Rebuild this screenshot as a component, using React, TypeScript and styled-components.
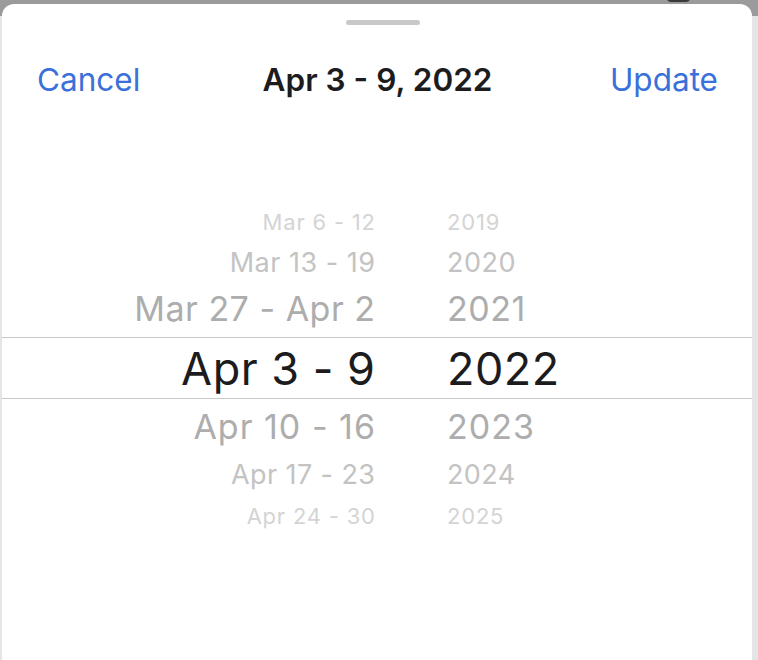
import styled, { createGlobalStyle } from "styled-components";

const GlobalStyle = createGlobalStyle`
  html, body {
    margin: 0;
    padding: 0;
    background: #e5e5e5;
    font-family: Inter, "Noto Sans", sans-serif;
  }
`;

type WheelRow = {
  week: string;
  year: string;
  size: number;
  spacing: number;
  height: number;
  color: string;
};

const rowsAbove: WheelRow[] = [
  { week: "Mar 6 - 12", year: "2019", size: 22, spacing: 0.8, height: 44, color: "#d4d4d4" },
  { week: "Mar 13 - 19", year: "2020", size: 27, spacing: 0.5, height: 36, color: "#c3c3c3" },
  { week: "Mar 27 - Apr 2", year: "2021", size: 34, spacing: 0.5, height: 57, color: "#adadad" },
];

const rowsBelow: WheelRow[] = [
  { week: "Apr 10 - 16", year: "2023", size: 34, spacing: 1, height: 55, color: "#adadad" },
  { week: "Apr 17 - 23", year: "2024", size: 27, spacing: 0.4, height: 41, color: "#c3c3c3" },
  { week: "Apr 24 - 30", year: "2025", size: 22, spacing: 0.8, height: 42, color: "#d4d4d4" },
];

function Row({ row }: { row: WheelRow }) {
  return (
    <WheelLine $height={row.height}>
      <WeekCell $size={row.size} $spacing={row.spacing} $color={row.color}>
        {row.week}
      </WeekCell>
      <YearCell $size={row.size} $spacing={row.spacing} $color={row.color}>
        {row.year}
      </YearCell>
    </WheelLine>
  );
}

export default function App() {
  return (
    <>
      <GlobalStyle />
      <Screen>
        <BehindIcon />
        <Sheet>
          <Handle />
          <Header>
            <TextButton>Cancel</TextButton>
            <Title>Apr 3 - 9, 2022</Title>
            <TextButton $right>Update</TextButton>
          </Header>
          <Wheel>
            {rowsAbove.map((r) => (
              <Row key={r.week} row={r} />
            ))}
            <SelectedLine>
              <WeekCell $size={45} $spacing={0.5} $color="#1c1c1e">
                Apr 3 - 9
              </WeekCell>
              <YearCell $size={45} $spacing={0.5} $color="#1c1c1e">
                2022
              </YearCell>
            </SelectedLine>
            {rowsBelow.map((r) => (
              <Row key={r.week} row={r} />
            ))}
          </Wheel>
        </Sheet>
      </Screen>
    </>
  );
}

const Screen = styled.div`
  position: relative;
  width: 758px;
  height: 660px;
  overflow: hidden;
  background: linear-gradient(#9b9b9b 0 16px, #e5e5e5 16px);
  padding: 4px 6px 0 2px;
  box-sizing: border-box;
`;

const BehindIcon = styled.div`
  position: absolute;
  top: -20px;
  left: 667px;
  width: 23px;
  height: 22px;
  border-radius: 4px;
  background: #3a3a3a;
`;

const Sheet = styled.div`
  position: relative;
  height: 100%;
  background: #ffffff;
  border-radius: 12px 12px 0 0;
  display: flex;
  flex-direction: column;
  align-items: stretch;
`;

const Handle = styled.div`
  align-self: center;
  width: 74px;
  height: 5px;
  margin: 16px 0 0 12px;
  border-radius: 3px;
  background: #c8c8c8;
`;

const Header = styled.div`
  display: grid;
  grid-template-columns: 1fr auto 1fr;
  align-items: center;
  height: 110px;
  padding: 0 34px 0 35px;
`;

const TextButton = styled.div<{ $right?: boolean }>`
  justify-self: ${(p) => (p.$right ? "end" : "start")};
  font-size: 31.5px;
  line-height: 1;
  color: #3a70d9;
`;

const Title = styled.div`
  font-size: 31.5px;
  font-weight: 600;
  line-height: 1;
  color: #1c1c1e;
`;

const Wheel = styled.div`
  margin-top: 65px;
  display: flex;
  flex-direction: column;
`;

const WheelLine = styled.div<{ $height: number }>`
  display: grid;
  grid-template-columns: 373px 1fr;
  column-gap: 72px;
  align-items: center;
  height: ${(p) => p.$height}px;
`;

const SelectedLine = styled.div`
  display: grid;
  grid-template-columns: 373px 1fr;
  column-gap: 72px;
  align-items: center;
  height: 60px;
  border-top: 1px solid #c8c8c8;
  border-bottom: 1px solid #c8c8c8;
`;

const WeekCell = styled.div<{ $size: number; $spacing: number; $color: string }>`
  justify-self: end;
  margin-right: -${(p) => p.$spacing}px;
  font-size: ${(p) => p.$size}px;
  letter-spacing: ${(p) => p.$spacing}px;
  line-height: 1;
  color: ${(p) => p.$color};
  white-space: nowrap;
`;

const YearCell = styled.div<{ $size: number; $spacing: number; $color: string }>`
  justify-self: start;
  font-size: ${(p) => p.$size}px;
  letter-spacing: ${(p) => p.$spacing}px;
  line-height: 1;
  color: ${(p) => p.$color};
`;
